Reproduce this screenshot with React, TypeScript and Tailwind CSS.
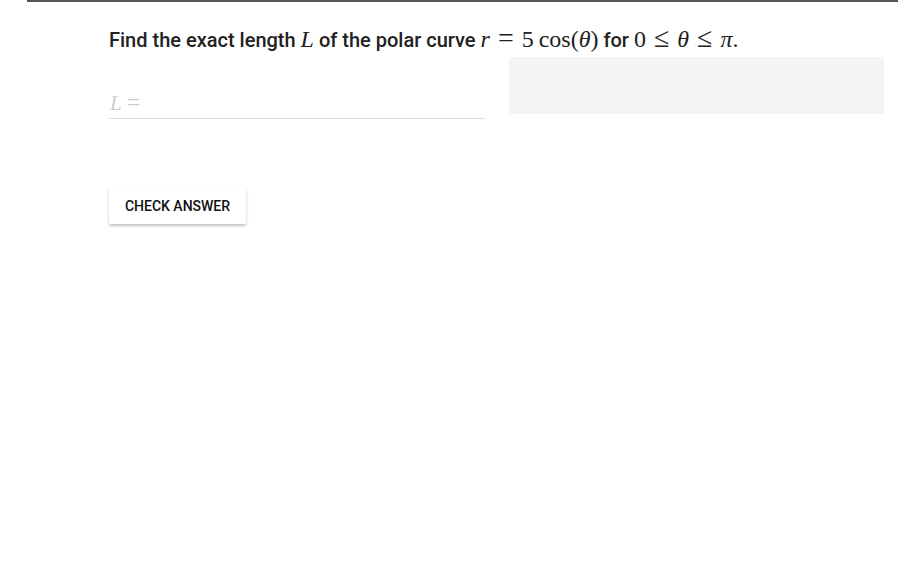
import React from "react";

const M = ({ children, i = false, cls = "" }: { children: React.ReactNode; i?: boolean; cls?: string }) => (
  <span className={`${i ? "italic" : ""} text-[24px] ${cls}`} style={{ fontFamily: '"Liberation Serif", "DejaVu Serif", serif' }}>
    {children}
  </span>
);

export default function App() {
  return (
    <div className="min-h-[579px] w-[898px] bg-white" style={{ fontFamily: 'Roboto, "Liberation Sans", sans-serif' }}>
      <div className="ml-[27px] h-[2px] bg-[#555555]" />
      <div className="pl-[109px] pt-[23px] pr-[14px]">
        <p className="text-[20px] font-medium text-[#222222] leading-[28px] whitespace-nowrap">
          Find the exact length <M i>L</M> of the polar curve <M i>r</M>
          <M cls="mx-[8px] text-[28px] leading-[20px]">=</M>
          <M>5</M>
          <M cls="ml-[5px]">cos(</M>
          <M i>θ</M>
          <M>)</M> for <M>0</M>
          <M cls="mx-[8px] text-[28px] leading-[20px]">≤</M>
          <M i>θ</M>
          <M cls="mx-[8px] text-[28px] leading-[20px]">≤</M>
          <M i>π</M>
          <M>.</M>
        </p>
        <div className="flex items-start gap-[24px] mt-[3px]">
          <div className="w-[376px] pt-[30px]">
            <div className="h-[32px] border-b border-[#dddddd] flex items-center">
              <span className="italic text-[21px] text-[#cccccc] pl-[1px] leading-[24px]" style={{ fontFamily: '"Liberation Serif", serif' }}>
                L<span className="not-italic text-[24px] ml-[5px]">=</span>
              </span>
            </div>
          </div>
          <div className="w-[375px] h-[57px] rounded-[3px] bg-[#f4f4f4]" />
        </div>
        <button className="mt-[69px] h-[36px] w-[137px] bg-white text-[14px] font-medium text-[#111111] rounded-[2px] shadow-[0_2px_3px_rgba(0,0,0,0.25)]">
          CHECK ANSWER
        </button>
      </div>
    </div>
  );
}
